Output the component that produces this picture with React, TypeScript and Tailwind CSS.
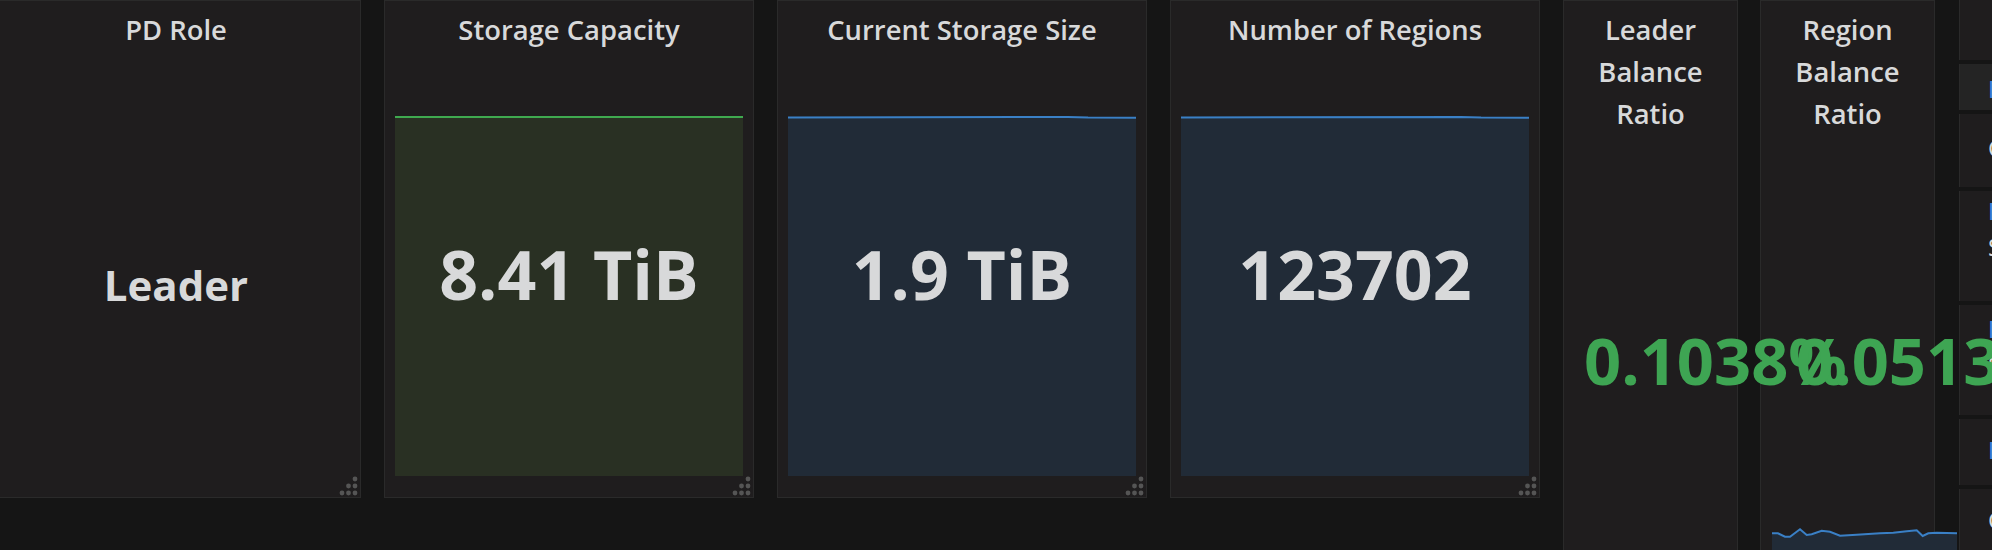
import React from 'react';

// Grafana-style dark stat panels (PD overview row)

const PANEL = 'relative shrink-0 flex flex-col bg-[#1f1d1e] border border-[#2a2a2a]';

const ResizeHandle = () => (
  <svg className="absolute right-[1px] bottom-[1px] w-[20px] h-[20px]" viewBox="0 0 20 20">
    <g fill="#555">
      <circle cx="16" cy="3" r="2.4" />
      <circle cx="9.5" cy="10" r="2.4" />
      <circle cx="16" cy="10" r="2.4" />
      <circle cx="3" cy="17" r="2.4" />
      <circle cx="9.5" cy="17" r="2.4" />
      <circle cx="16" cy="17" r="2.4" />
    </g>
  </svg>
);

interface StatProps {
  title: string;
  value: string;
  chart?: 'green' | 'blue';
  small?: boolean;
}

const Stat: React.FC<StatProps> = ({ title, value, chart, small }) => {
  const line = chart === 'green' ? '#3fa94f' : '#3a80c6';
  const fill = chart === 'green' ? '#293023' : '#212b37';
  return (
    <div className={`${PANEL} w-[370px] h-[498px]`}>
      <div className="h-[115px] pt-[8px] text-center text-[27.4px] font-semibold leading-[42px]">{title}</div>
      <div className="grid grid-cols-1 grid-rows-1 flex-1 px-[10px] pb-[21px]">
        {chart && (
          <svg className="col-start-1 row-start-1 w-full h-full" viewBox="0 0 348 360" preserveAspectRatio="none">
            <rect x="0" y="1" width="348" height="359" fill={fill} />
            <polyline
              points={chart === 'green' ? '0,1 348,1' : '0,1.4 280,1 300,1.6 348,1.8'}
              fill="none"
              stroke={line}
              strokeWidth="2"
            />
          </svg>
        )}
        <div
          className={`col-start-1 row-start-1 flex items-center justify-center font-bold leading-none ${
            small ? 'text-[42px] pb-[22px]' : 'text-[68px] pb-[44px]'
          }`}
        >
          {value}
        </div>
      </div>
      <ResizeHandle />
    </div>
  );
};

interface RatioProps {
  lines: string[];
  value: string;
  width: string;
  pad: string;
  spark?: boolean;
}

const Ratio: React.FC<RatioProps> = ({ lines, value, width, pad, spark }) => (
  <div className={`${PANEL} ${width} h-[640px]`}>
    <div className="h-[134px] pt-[8px] text-center text-[27.4px] font-semibold leading-[42px]">
      {lines.map((l) => (
        <div key={l}>{l}</div>
      ))}
    </div>
    <div className="grid grid-cols-1 grid-rows-1 h-[450px]">
      {spark && (
        <svg
          className="col-start-1 row-start-1 self-start mt-[390px] ml-[11px] w-[186px] h-[40px] overflow-visible"
          viewBox="0 0 186 40"
        >
          <polygon
            fill="#212b37"
            points="0,8.3 6,8.3 13,11.7 18,11.7 28,4.3 34.7,10 39.7,9.3 49.7,5.7 58,6.7 68,10.7 84.7,9.7 108,8.3 121.3,7.7 134.7,6.3 144.7,5.3 150.7,11 156.3,8.3 164.7,7.7 185,8.3 185,40 0,40"
          />
          <polyline
            fill="none"
            stroke="#3a80c6"
            strokeWidth="2"
            points="0,8.3 6,8.3 13,11.7 18,11.7 28,4.3 34.7,10 39.7,9.3 49.7,5.7 58,6.7 68,10.7 84.7,9.7 108,8.3 121.3,7.7 134.7,6.3 144.7,5.3 150.7,11 156.3,8.3 164.7,7.7 185,8.3"
          />
        </svg>
      )}
      <div className="col-start-1 row-start-1 flex items-center">
        <div
          className={`relative z-10 w-full ${pad} pr-[20px] text-center whitespace-nowrap text-[65px] font-bold leading-none text-[#3ea553]`}
        >
          {value}
        </div>
      </div>
    </div>
  </div>
);

const SideRow: React.FC<{ h: string; pt: string; bg?: string; items: { text: string; blue?: boolean }[] }> = ({
  h,
  pt,
  bg = 'bg-[#1f1d1e]',
  items,
}) => (
  <div className={`${h} ${pt} ${bg} border-x border-[#2a2a2a] pl-[28px] text-[24px] leading-[36px] whitespace-nowrap`}>
    {items.map((it) => (
      <div key={it.text} className={it.blue ? 'text-[#3d86d2] font-semibold' : 'text-[#d8d9da]'}>
        {it.text}
      </div>
    ))}
  </div>
);

export default function App() {
  return (
    <div className="h-[550px] w-[1992px] overflow-hidden bg-[#151515] font-['Open_Sans',sans-serif] text-[#d8d9da]">
      <div className="flex items-start gap-[23px] -ml-[9px]">
        <Stat title="PD Role" value="Leader" small />
        <Stat title="Storage Capacity" value="8.41 TiB" chart="green" />
        <Stat title="Current Storage Size" value="1.9 TiB" chart="blue" />
        <Stat title="Number of Regions" value="123702" chart="blue" />
        <Ratio lines={['Leader', 'Balance', 'Ratio']} value="0.1038%" width="w-[175px]" pad="pl-[20px]" />
        <div className="-ml-px">
          <Ratio
            lines={['Region', 'Balance', 'Ratio']}
            value="0.0513%"
            width="w-[175px]"
            pad="pl-[35px]"
            spark
          />
        </div>
        <div className="ml-px shrink-0 w-[320px] flex flex-col gap-[4px]">
          <div className="h-[60px] bg-[#1f1d1e] border-x border-[#2a2a2a]" />
          <SideRow h="h-[46px]" pt="pt-[7px]" bg="bg-[#242424]" items={[{ text: 'Leader', blue: true }]} />
          <SideRow h="h-[73px]" pt="pt-[16px]" items={[{ text: 'Cluster' }]} />
          <SideRow
            h="h-[110px]"
            pt="pt-[2px]"
            items={[{ text: 'Leader', blue: true }, { text: 'Store' }]}
          />
          <SideRow
            h="h-[110px]"
            pt="pt-[6px]"
            items={[{ text: 'Leader', blue: true }, { text: 'Store' }]}
          />
          <SideRow h="h-[66px]" pt="pt-[13px]" items={[{ text: 'Leader', blue: true }]} />
          <SideRow h="h-[80px]" pt="pt-[13px]" items={[{ text: 'Cluster' }]} />
        </div>
      </div>
    </div>
  );
}
